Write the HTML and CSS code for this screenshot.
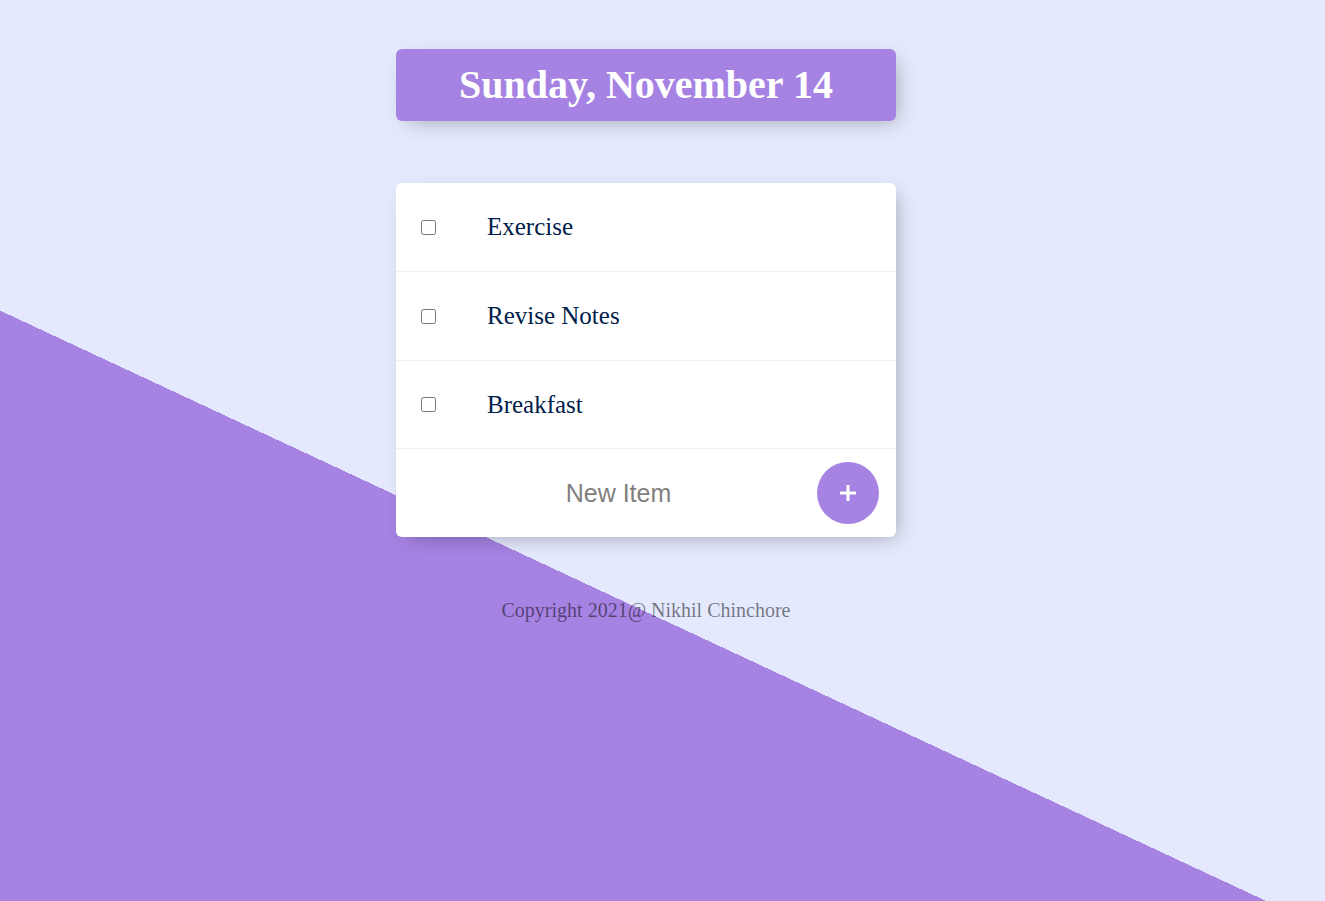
FILE: index.html
```html
<!DOCTYPE html>
<html lang="en">
<head>
<meta charset="utf-8">
<title>To-Do List</title>
<link rel="stylesheet" href="styles.css">
</head>
<body>
<div class="page">
  <div class="box heading">
    <h1>Sunday, November 14</h1>
  </div>
  <div class="box list">
    <div class="item">
      <input type="checkbox" class="check">
      <p class="label">Exercise</p>
    </div>
    <div class="item">
      <input type="checkbox" class="check">
      <p class="label">Revise Notes</p>
    </div>
    <div class="item item-short">
      <input type="checkbox" class="check">
      <p class="label">Breakfast</p>
    </div>
    <form class="item new-item">
      <input type="text" class="new-input" placeholder="New Item" autocomplete="off">
      <button type="button" class="add-btn" aria-label="Add">
        <svg width="20" height="20" viewBox="0 0 20 20"><path d="M10 2v16M2 10h16" stroke="#fff" stroke-width="3" fill="none"/></svg>
      </button>
    </form>
  </div>
  <footer class="footer">Copyright 2021@ Nikhil Chinchore</footer>
</div>
</body>
</html>
```

FILE: styles.css
```css
html {
  background-color: #E4E9FD;
  background-image: linear-gradient(25deg, #A683E3 50%, #E4E9FD 50%);
  background-size: 1325px 1239px;
  background-repeat: no-repeat;
  height: 100%;
  overflow: hidden;
}

body {
  margin: 0;
  font-family: "Liberation Serif", "Times New Roman", serif;
}

.page {
  width: 1292px;
  padding-top: 49px;
  display: flex;
  flex-direction: column;
  align-items: center;
}

.box {
  width: 500px;
  background: #fff;
  border-radius: 6px;
  box-shadow: 6px 6px 19px -6px rgba(0, 0, 0, 0.3);
}

.heading {
  background-color: #A683E3;
  text-align: center;
}

.heading h1 {
  margin: 0;
  padding: 12px 0 12px;
  font-size: 40px;
  line-height: 48px;
  font-weight: bold;
  color: #fff;
}

.list {
  margin-top: 62px;
}

.item {
  height: 88px;
  display: flex;
  align-items: center;
  border-bottom: 1px solid #F1F1F1;
  margin: 0;
}

.item-short {
  height: 87px;
}

.item:last-child {
  border-bottom: 0;
  height: 88px;
}

.check {
  width: 15px;
  height: 15px;
  margin: 0 26px 0 25px;
}

.label {
  margin: 0;
  padding: 0 25px;
  font-size: 25px;
  color: #00204a;
}

.new-item {
  justify-content: flex-start;
  padding-left: 27px;
}

.new-input {
  width: 391px;
  height: 75px;
  border: none;
  background: transparent;
  text-align: center;
  font-family: "Liberation Sans", Arial, sans-serif;
  font-size: 25px;
  padding: 0;
  margin: 0;
  outline: none;
}

.new-input::placeholder {
  color: grey;
  opacity: 1;
}

.add-btn {
  width: 62px;
  height: 62px;
  border-radius: 50%;
  border: 0;
  background-color: #A683E3;
  margin-left: 3px;
  padding: 0;
  display: flex;
  align-items: center;
  justify-content: center;
}

.add-btn svg {
  display: block;
}

.footer {
  margin-top: 62px;
  font-size: 20px;
  line-height: 23px;
  color: rgba(0, 0, 0, 0.5);
  text-align: center;
}
```
